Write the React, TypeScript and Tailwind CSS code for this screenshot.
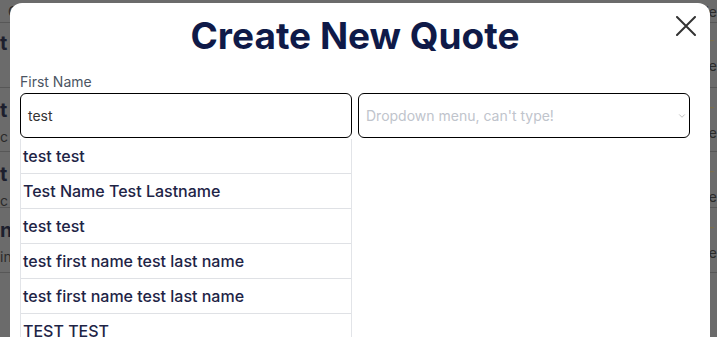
import { ChevronDown } from "lucide-react";

const bgRows = [
  { h: "h-[65px]", left: ["t -", ""], right: ["-", "ie"], lt: "pt-[8px]" },
  { h: "h-[64px]", left: ["t -", "c"], right: ["-", "ie"], lt: "pt-[10px]" },
  { h: "h-[56px]", left: ["t -", "c"], right: ["-", "ie"], lt: "pt-[10px]" },
  { h: "h-[65px]", left: ["n", "in"], right: ["-", "ie"], lt: "pt-[10px]" },
];

const suggestions = [
  "test test",
  "Test Name Test Lastname",
  "test test",
  "test first name test last name",
  "test first name test last name",
  "TEST TEST",
];

const App = () => {
  return (
    <div className="relative h-[337px] w-[717px] overflow-hidden bg-[#6b6b6b] font-['Inter',sans-serif]">
      {/* page behind the overlay */}
      <div className="flex flex-col">
        <div className="flex h-[23px] items-center border-b border-[#575757] text-[14px] text-[#2a2a2a]">
          <span className="w-[708px] pl-[8px]">Customer</span>
          <span>ie</span>
        </div>
        {bgRows.map((row, i) => (
          <div
            key={i}
            className={`flex border-b border-[#575757] ${row.h} ${row.lt}`}
          >
            <div className="flex w-[708px] flex-col gap-[6px]">
              <span className="text-[20px] font-bold leading-[24px] text-[#1c1f2e]">
                {row.left[0]}
              </span>
              <span className="text-[14px] leading-[18px] text-[#2a2a2a]">
                {row.left[1]}
              </span>
            </div>
            <div className="flex flex-col gap-[8px] text-[14px] leading-[18px] text-[#2a2a2a]">
              <span className="pl-[3px] text-[#7a6f4a]">{row.right[0]}</span>
              <span>{row.right[1]}</span>
            </div>
          </div>
        ))}
      </div>

      {/* modal */}
      <div className="absolute left-[10px] top-[3px] h-[380px] w-[700px] rounded-[12px] bg-white pl-[10px] pr-[20px] pt-[13px]">
        <button className="absolute right-[11px] top-[10px] flex h-[26px] w-[26px] items-center justify-center">
          <svg width="20" height="20" viewBox="0 0 20 20" fill="none">
            <path
              d="M1 1L19 19M19 1L1 19"
              stroke="#333"
              strokeWidth="2"
              strokeLinecap="round"
            />
          </svg>
        </button>

        <h1 className="text-center text-[37px] font-bold leading-[40px] text-[#0f1a48]">
          Create New Quote
        </h1>

        <div className="mt-[16px] grid grid-cols-2 gap-[6px]">
          <div className="flex flex-col">
            <label className="text-[14px] leading-[20px] text-[#4b5563]">
              First Name
            </label>
            <div className="relative mt-[1px]">
              <div className="flex h-[45px] items-center rounded-[6px] border border-black pl-[7px] text-[14px] text-[#333]">
                test
              </div>
              <ul className="absolute left-0 top-[calc(100%+1px)] w-full border-x border-[#e2e4e8] bg-white">
                {suggestions.map((s, i) => (
                  <li
                    key={i}
                    className="flex h-[35px] items-center border-b border-[#dfe1e5] pl-[2px] text-[16px] font-medium text-[#1e2446]"
                  >
                    {s}
                  </li>
                ))}
              </ul>
            </div>
          </div>
          <div className="flex flex-col pt-[21px]">
            <div className="flex h-[45px] items-center justify-between rounded-[6px] border border-black pl-[7px] pr-[2px] text-[14px] text-[#c0c4cc]">
              <span>Dropdown menu, can't type!</span>
              <ChevronDown size={10} strokeWidth={1.5} color="#999" />
            </div>
          </div>
        </div>
      </div>
    </div>
  );
};

export default App;
